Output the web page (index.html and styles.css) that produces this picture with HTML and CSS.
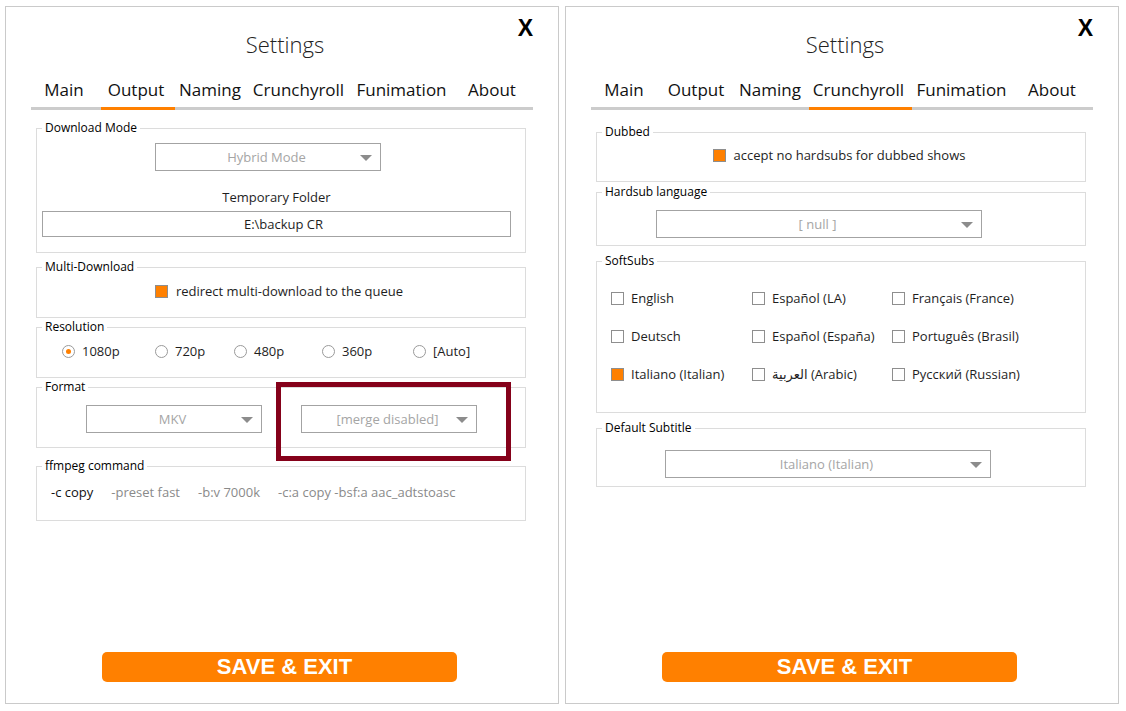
FILE: index.html
```html
<!DOCTYPE html>
<html lang="en">
<head>
  <meta charset="UTF-8">
  <title>Settings</title>
  <link rel="stylesheet" href="styles.css">
</head>
<body>
  <!-- Output tab -->
  <div class="panel">
    <div class="close">X</div>
    <h1 class="title">Settings</h1>
    <div class="tabs">
      <div class="tab">Main</div>
      <div class="tab active">Output</div>
      <div class="tab">Naming</div>
      <div class="tab">Crunchyroll</div>
      <div class="tab">Funimation</div>
      <div class="tab">About</div>
    </div>

    <fieldset class="group download">
      <legend>Download Mode</legend>
      <div class="select mode">Hybrid Mode</div>
      <div class="folder">
        <div class="folder-label">Temporary Folder</div>
        <div class="textbox">E:\backup CR</div>
      </div>
    </fieldset>

    <fieldset class="group multi">
      <legend>Multi-Download</legend>
      <div class="row center">
        <span class="check on"></span>
        <span>redirect multi-download to the queue</span>
      </div>
    </fieldset>

    <fieldset class="group resolution">
      <legend>Resolution</legend>
      <div class="radios">
        <label class="option"><span class="radio on"></span>1080p</label>
        <label class="option"><span class="radio"></span>720p</label>
        <label class="option"><span class="radio"></span>480p</label>
        <label class="option"><span class="radio"></span>360p</label>
        <label class="option"><span class="radio"></span>[Auto]</label>
      </div>
    </fieldset>

    <fieldset class="group format">
      <legend>Format</legend>
      <div class="format-row">
        <div class="select">MKV</div>
        <div class="highlight">
          <div class="select">[merge disabled]</div>
        </div>
      </div>
    </fieldset>

    <fieldset class="group ffmpeg">
      <legend>ffmpeg command</legend>
      <div class="cmd">
        <span class="cmd-main">-c copy</span>
        <span>-preset fast</span>
        <span>-b:v 7000k</span>
        <span>-c:a copy -bsf:a aac_adtstoasc</span>
      </div>
    </fieldset>

    <button class="save">SAVE &amp; EXIT</button>
  </div>

  <!-- Crunchyroll tab -->
  <div class="panel">
    <div class="close">X</div>
    <h1 class="title">Settings</h1>
    <div class="tabs">
      <div class="tab">Main</div>
      <div class="tab">Output</div>
      <div class="tab">Naming</div>
      <div class="tab active">Crunchyroll</div>
      <div class="tab">Funimation</div>
      <div class="tab">About</div>
    </div>

    <fieldset class="group dubbed">
      <legend>Dubbed</legend>
      <div class="row center">
        <span class="check on"></span>
        <span>accept no hardsubs for dubbed shows</span>
      </div>
    </fieldset>

    <fieldset class="group hardsub">
      <legend>Hardsub language</legend>
      <div class="select wide">[ null ]</div>
    </fieldset>

    <fieldset class="group softsubs">
      <legend>SoftSubs</legend>
      <div class="langs">
        <label class="option"><span class="check"></span>English</label>
        <label class="option"><span class="check"></span>Español (LA)</label>
        <label class="option"><span class="check"></span>Français (France)</label>
        <label class="option"><span class="check"></span>Deutsch</label>
        <label class="option"><span class="check"></span>Español (España)</label>
        <label class="option"><span class="check"></span>Português (Brasil)</label>
        <label class="option"><span class="check on"></span>Italiano (Italian)</label>
        <label class="option"><span class="check"></span>العربية (Arabic)</label>
        <label class="option"><span class="check"></span>Русский (Russian)</label>
      </div>
    </fieldset>

    <fieldset class="group default-sub">
      <legend>Default Subtitle</legend>
      <div class="select wide">Italiano (Italian)</div>
    </fieldset>

    <button class="save">SAVE &amp; EXIT</button>
  </div>
</body>
</html>
```

FILE: styles.css
```css
* {
  box-sizing: border-box;
}
body {
  margin: 0;
  padding: 6px 0 0 5px;
  display: flex;
  gap: 6px;
  font-family: "Open Sans", "DejaVu Sans", sans-serif;
  font-size: 13px;
  color: #1e1e1e;
  background: #fff;
}
.panel {
  position: relative;
  width: 554px;
  height: 698px;
  border: 1px solid #cacaca;
  display: flex;
  flex-direction: column;
}
.close {
  position: absolute;
  top: 9px;
  right: 25px;
  font: bold 23px/24px "Liberation Sans", Arial, sans-serif;
  color: #000;
}
.title {
  margin: 22px 0 0;
  padding-left: 6px;
  text-align: center;
  font-size: 22px;
  font-weight: 300;
  line-height: 30px;
  color: #222;
}

/* tab strip */
.tabs {
  display: grid;
  grid-template-columns: 70px 74px 74px 103px 103px 78px;
  width: 502px;
  margin: 18px 0 0 25px;
}
.tab {
  padding: 0 4px 4px 0;
  line-height: 26px;
  font-size: 17px;
  text-align: center;
  color: #111;
  border-bottom: 3px solid #cccccc;
}
.tab.active {
  border-bottom-color: #ff8000;
}

/* group boxes */
.group {
  width: 490px;
  min-width: 0;
  margin: 10px 0 0 30px;
  padding: 7px 0 15px;
  border: 1px solid #dcdcdc;
}
.group legend {
  margin-left: 5px;
  padding: 0 3px;
  font-size: 12px;
  line-height: 16px;
  color: #000;
}
.multi { margin-top: 6px; padding: 7px 0 17px; }
.resolution { margin-top: 1px; padding: 7px 0 17px; }
.format { margin-top: 1px; padding: 10px 0 14px; }
.ffmpeg { margin-top: 10px; padding: 9px 0 19px; }

.dubbed { margin-top: 14px; padding: 6px 0 17px; }
.hardsub { margin-top: 2px; padding: 10px 0 7px; }
.softsubs { margin-top: 7px; padding: 10px 0 19px; }
.default-sub { margin-top: 7px; padding: 14px 0 8px; }

/* dropdowns */
.select {
  position: relative;
  width: 176px;
  height: 28px;
  padding-right: 3px;
  border: 1px solid #a3a3a3;
  line-height: 26px;
  text-align: center;
  color: #a5a5a5;
}
.select::after {
  content: "";
  position: absolute;
  top: 11px;
  right: 8px;
  border-left: 6px solid transparent;
  border-right: 6px solid transparent;
  border-top: 6px solid #8c8c8c;
}
.select.mode {
  width: 226px;
  margin-left: 118px;
}
.select.wide {
  width: 326px;
}
.hardsub .select {
  margin-left: 59px;
}
.default-sub .select {
  margin-left: 68px;
}

.folder {
  width: 469px;
  margin-left: 5px;
  text-align: center;
}
.folder-label {
  margin-top: 17px;
  line-height: 18px;
}
.textbox {
  height: 26px;
  margin-top: 5px;
  border: 1px solid #a3a3a3;
  line-height: 24px;
  padding-left: 14px;
}

/* checkboxes and radios */
.row {
  display: flex;
  align-items: center;
  gap: 8px;
  line-height: 18px;
}
.row.center {
  justify-content: center;
  padding-right: 4px;
}
.check {
  display: inline-block;
  flex: none;
  width: 13px;
  height: 13px;
  border: 1px solid #8e8e8e;
  background: #fff;
}
.check.on {
  background: #ff8000;
}
.radio {
  display: inline-block;
  flex: none;
  width: 13px;
  height: 13px;
  border: 1px solid #9a9a9a;
  border-radius: 50%;
  background: #fff;
  position: relative;
}
.radio.on::after {
  content: "";
  position: absolute;
  top: 3px;
  left: 3px;
  width: 5px;
  height: 5px;
  border-radius: 50%;
  background: #ff8000;
}
.option {
  display: flex;
  align-items: center;
  gap: 7px;
  line-height: 18px;
  white-space: nowrap;
}
.radios {
  display: grid;
  grid-template-columns: 93px 79px 88px 91px auto;
  padding-left: 25px;
}
.langs {
  display: grid;
  grid-template-columns: 141px 140px auto;
  grid-auto-rows: 38px;
  align-items: center;
  padding-left: 14px;
}

.format-row {
  display: flex;
  gap: 39px;
  padding-left: 49px;
}
.highlight {
  position: relative;
}
.highlight::before {
  content: "";
  position: absolute;
  top: -23px;
  left: -25px;
  right: -34px;
  bottom: -28px;
  border: 5px solid #85011a;
}

.cmd {
  display: flex;
  gap: 18px;
  padding-left: 14px;
  line-height: 18px;
  color: #8a8a8a;
}
.cmd-main {
  color: #111;
}

.save {
  width: 355px;
  height: 30px;
  margin: auto 0 21px 96px;
  padding: 0 0 0 10px;
  border: none;
  border-radius: 5px;
  background: #ff8000;
  color: #fff;
  font: bold 22px/30px "Liberation Sans", Arial, sans-serif;
  cursor: pointer;
}
```
